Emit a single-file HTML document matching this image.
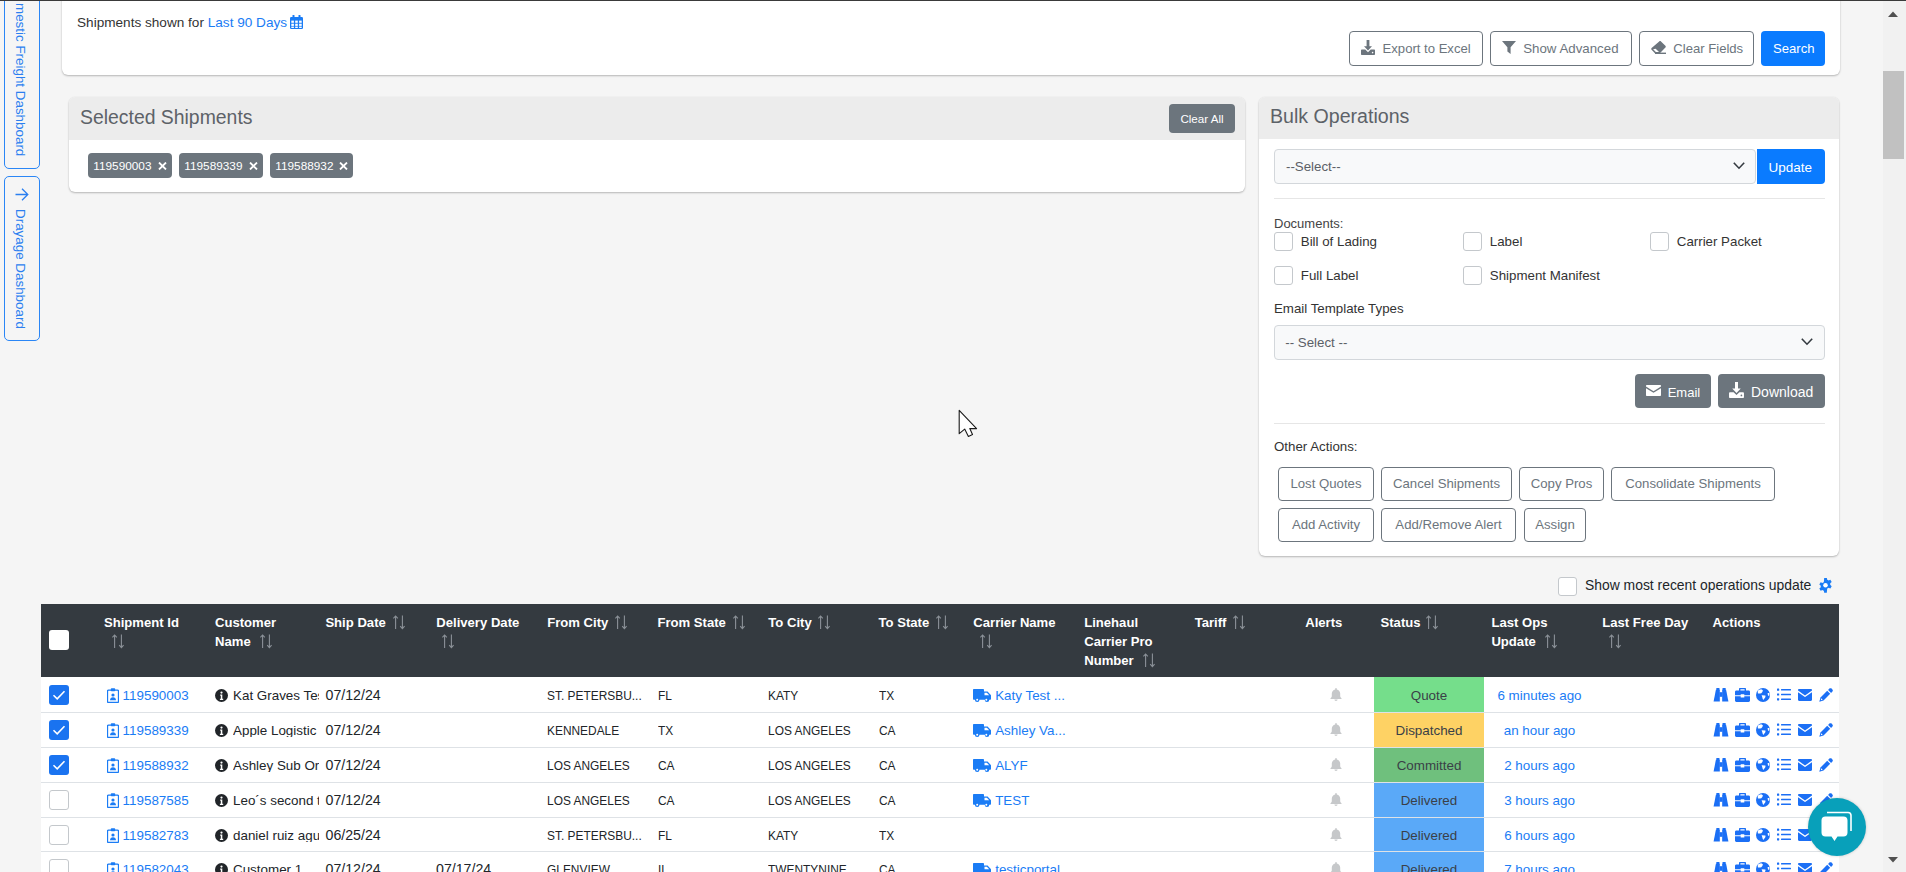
<!DOCTYPE html>
<html><head><meta charset="utf-8">
<style>
*{box-sizing:border-box}
html,body{margin:0;padding:0}
body{width:1906px;height:872px;overflow:hidden;position:relative;background:#f5f5f5;font-family:"Liberation Sans",sans-serif;font-size:14px;color:#212529}
.a{position:absolute}
.t{position:absolute;white-space:nowrap;line-height:1}
.card{position:absolute;background:#fff;border-radius:6px;box-shadow:0 1px 2px rgba(0,0,0,.25),0 0 1px rgba(0,0,0,.1)}
.bo{position:absolute;border:1px solid #6c757d;border-radius:4px;background:#fff}
.cb{position:absolute;border:1px solid #c4c8cc;border-radius:3px;background:#fff}
</style></head><body>
<div class="a" style="left:4px;top:-10px;width:36px;height:179px;border:1.8px solid #2a86f6;border-radius:0 0 5px 5px"></div>
<div class="a" style="left:4px;top:176px;width:36px;height:165px;border:1.8px solid #2a86f6;border-radius:5px"></div>
<div class="t" style="left:27px;top:2.5px;transform-origin:0 0;transform:rotate(90deg);font-size:13.4px;color:#2b7ff0">mestic Freight Dashboard</div>
<div class="t" style="left:27px;top:209px;transform-origin:0 0;transform:rotate(90deg);font-size:13.4px;color:#2b7ff0">Drayage Dashboard</div>
<svg class="a" style="left:14.5px;top:188px;" width="14" height="13" viewBox="0 0 14 13" fill="#1a7cf5"><path d="M0.5 6.5H13M7 0.8L12.8 6.5L7 12.2" stroke="#2b7ff0" stroke-width="1.3" fill="none"/></svg>
<div class="card" style="left:62px;top:-10px;width:1778px;height:85px"></div>
<div class="t" style="left:77.0px;top:15.69px;font-size:13.6px;color:#333;">Shipments shown for <span style="color:#1a7cf5">Last 90 Days</span></div>
<svg class="a" style="left:290px;top:15px;" width="13" height="14" viewBox="0 0 13 14" fill="#1a7cf5"><rect x="0" y="2" width="13" height="12" rx="1.2"/><rect x="2.5" y="0" width="2" height="3.5" rx=".6"/><rect x="8.5" y="0" width="2" height="3.5" rx=".6"/><g fill="#fff"><rect x="1.3" y="5.6" width="2.6" height="2.2"/><rect x="5.2" y="5.6" width="2.6" height="2.2"/><rect x="9.1" y="5.6" width="2.6" height="2.2"/><rect x="1.3" y="8.7" width="2.6" height="2.2"/><rect x="5.2" y="8.7" width="2.6" height="2.2"/><rect x="9.1" y="8.7" width="2.6" height="2.2"/><rect x="1.3" y="11.6" width="2.6" height="1.4"/><rect x="5.2" y="11.6" width="2.6" height="1.4"/><rect x="9.1" y="11.6" width="2.6" height="1.4"/></g></svg>
<div class="a" style="left:1349px;top:31px;width:134px;height:35px;border:1px solid #6c757d;border-radius:4px;background:#fff"></div>
<div class="a" style="left:1490px;top:31px;width:142px;height:35px;border:1px solid #6c757d;border-radius:4px;background:#fff"></div>
<div class="a" style="left:1639px;top:31px;width:115px;height:35px;border:1px solid #6c757d;border-radius:4px;background:#fff"></div>
<div class="a" style="left:1761px;top:31px;width:64px;height:35px;border-radius:4px;background:#0a7bff"></div>
<svg class="a" style="left:1361px;top:40px;" width="14" height="15" viewBox="0 0 14 15" fill="#6c757d"><path d="M5.6 0h2.8v6.2h2.6L7 10.4 3 6.2h2.6z"/><path d="M0 10.5c0-.6.4-1 1-1h3.3L7 12.2 9.7 9.5H13c.6 0 1 .4 1 1V14c0 .6-.4 1-1 1H1c-.6 0-1-.4-1-1z"/><circle cx="11.6" cy="12.6" r=".8" fill="#fff"/></svg>
<div class="t" style="left:1382.6px;top:42.41px;font-size:13.1px;color:#6c757d;">Export to Excel</div>
<svg class="a" style="left:1502px;top:41px;" width="14" height="13" viewBox="0 0 14 13" fill="#6c757d"><path d="M0 0h14L8.6 6.2V13L5.4 10.6V6.2z"/></svg>
<div class="t" style="left:1523.2px;top:42.24px;font-size:13.3px;color:#6c757d;">Show Advanced</div>
<svg class="a" style="left:1651px;top:41px;" width="15" height="13" viewBox="0 0 15 13" fill="#6c757d"><path d="M8.2 0.4c.5-.5 1.3-.5 1.8 0l4.4 4.4c.5.5.5 1.3 0 1.8L8.6 12.4H4.2L0.6 8.8c-.5-.5-.5-1.3 0-1.8z"/><path d="M4.7 7.8L8 11H4.9L2.1 8.3z" fill="#fff"/><rect x="4" y="11.6" width="11" height="1.4"/></svg>
<div class="t" style="left:1673.3px;top:42.41px;font-size:13.1px;color:#6c757d;">Clear Fields</div>
<div class="t" style="left:1773.0px;top:42.41px;font-size:13.1px;color:#fff;">Search</div>
<div class="card" style="left:69px;top:97px;width:1176px;height:95px;overflow:hidden"><div class="a" style="left:0;top:0;width:100%;height:43px;background:#ececec"></div></div>
<div class="t" style="left:80.0px;top:107.58px;font-size:19.4px;color:#5d6268;">Selected Shipments</div>
<div class="a" style="left:1169px;top:104px;width:66px;height:29px;border-radius:4px;background:#6c757d"></div>
<div class="t" style="left:902.0px;width:600px;text-align:center;top:112.68px;font-size:11.6px;color:#fff;">Clear All</div>
<div class="a" style="left:88px;top:153px;width:84px;height:25px;border-radius:4px;background:#6c757d"></div>
<div class="t" style="left:93.3px;top:160.51px;font-size:11.8px;color:#fff;">119590003</div>
<svg class="a" style="left:158px;top:162px;" width="9" height="8" viewBox="0 0 9 8" fill="#fff"><path d="M1 0.5L8 7.5M8 0.5L1 7.5" stroke="#fff" stroke-width="1.8"/></svg>
<div class="a" style="left:179px;top:153px;width:84px;height:25px;border-radius:4px;background:#6c757d"></div>
<div class="t" style="left:184.3px;top:160.51px;font-size:11.8px;color:#fff;">119589339</div>
<svg class="a" style="left:249px;top:162px;" width="9" height="8" viewBox="0 0 9 8" fill="#fff"><path d="M1 0.5L8 7.5M8 0.5L1 7.5" stroke="#fff" stroke-width="1.8"/></svg>
<div class="a" style="left:270px;top:153px;width:83px;height:25px;border-radius:4px;background:#6c757d"></div>
<div class="t" style="left:275.3px;top:160.51px;font-size:11.8px;color:#fff;">119588932</div>
<svg class="a" style="left:339px;top:162px;" width="9" height="8" viewBox="0 0 9 8" fill="#fff"><path d="M1 0.5L8 7.5M8 0.5L1 7.5" stroke="#fff" stroke-width="1.8"/></svg>
<div class="card" style="left:1259px;top:97px;width:580px;height:459px;overflow:hidden"><div class="a" style="left:0;top:0;width:100%;height:42px;background:#ececec"></div></div>
<div class="t" style="left:1270.0px;top:107.21px;font-size:19.6px;color:#5d6268;">Bulk Operations</div>
<div class="a" style="left:1274px;top:149px;width:482px;height:35px;border:1px solid #d3d7db;border-radius:4px;background:#f8f9fa"></div>
<div class="t" style="left:1286.0px;top:159.74px;font-size:13.3px;color:#5b6066;">--Select--</div>
<svg class="a" style="left:1733px;top:162px;" width="12" height="8" viewBox="0 0 12 8" fill="#1a7cf5"><path d="M0.8 0.8L6 6.2 11.2 0.8" stroke="#343a40" stroke-width="1.6" fill="none"/></svg>
<div class="a" style="left:1757px;top:149px;width:68px;height:35px;border-radius:0 4px 4px 0;background:#0a7bff"></div>
<div class="t" style="left:1768.4px;top:160.87px;font-size:13.5px;color:#fff;">Update</div>
<div class="a" style="left:1274px;top:198px;width:551px;height:1px;background:#e6e6e6"></div>
<div class="t" style="left:1274.0px;top:216.60px;font-size:13px;color:#444;">Documents:</div>
<div class="cb" style="left:1274px;top:232px;width:19px;height:19px"></div>
<div class="t" style="left:1300.8px;top:234.74px;font-size:13.3px;color:#333;">Bill of Lading</div>
<div class="cb" style="left:1463px;top:232px;width:19px;height:19px"></div>
<div class="t" style="left:1489.8px;top:234.74px;font-size:13.3px;color:#333;">Label</div>
<div class="cb" style="left:1650px;top:232px;width:19px;height:19px"></div>
<div class="t" style="left:1676.8px;top:234.74px;font-size:13.3px;color:#333;">Carrier Packet</div>
<div class="cb" style="left:1274px;top:266px;width:19px;height:19px"></div>
<div class="t" style="left:1300.8px;top:268.74px;font-size:13.3px;color:#333;">Full Label</div>
<div class="cb" style="left:1463px;top:266px;width:19px;height:19px"></div>
<div class="t" style="left:1489.8px;top:268.74px;font-size:13.3px;color:#333;">Shipment Manifest</div>
<div class="t" style="left:1274.0px;top:301.74px;font-size:13.3px;color:#333;">Email Template Types</div>
<div class="a" style="left:1274px;top:325px;width:551px;height:35px;border:1px solid #d3d7db;border-radius:4px;background:#f8f9fa"></div>
<div class="t" style="left:1285.3px;top:336.14px;font-size:13.3px;color:#5b6066;">-- Select --</div>
<svg class="a" style="left:1801px;top:338px;" width="12" height="8" viewBox="0 0 12 8" fill="#1a7cf5"><path d="M0.8 0.8L6 6.2 11.2 0.8" stroke="#343a40" stroke-width="1.6" fill="none"/></svg>
<div class="a" style="left:1635px;top:374px;width:76px;height:34px;border-radius:4px;background:#6c757d"></div>
<svg class="a" style="left:1646px;top:385px;" width="15" height="11" viewBox="0 0 15 11" fill="#fff"><path d="M0 1c0-.6.4-1 1-1h13c.6 0 1 .4 1 1v.6L7.5 6.2 0 1.6z"/><path d="M0 3.2l7.5 4.6L15 3.2V10c0 .6-.4 1-1 1H1c-.6 0-1-.4-1-1z"/></svg>
<div class="t" style="left:1667.7px;top:385.80px;font-size:13.0px;color:#fff;">Email</div>
<div class="a" style="left:1718px;top:374px;width:107px;height:34px;border-radius:4px;background:#6c757d"></div>
<svg class="a" style="left:1729px;top:382px;" width="15" height="16" viewBox="0 0 14 15" fill="#fff"><path d="M5.6 0h2.8v6.2h2.6L7 10.4 3 6.2h2.6z"/><path d="M0 10.5c0-.6.4-1 1-1h3.3L7 12.2 9.7 9.5H13c.6 0 1 .4 1 1V14c0 .6-.4 1-1 1H1c-.6 0-1-.4-1-1z"/><circle cx="11.6" cy="12.6" r=".8" fill="#6c757d"/></svg>
<div class="t" style="left:1751.0px;top:384.95px;font-size:14.0px;color:#fff;">Download</div>
<div class="a" style="left:1274px;top:423px;width:551px;height:1px;background:#e6e6e6"></div>
<div class="t" style="left:1274.0px;top:440.44px;font-size:13.3px;color:#333;">Other Actions:</div>
<div class="a" style="left:1278px;top:467px;width:96px;height:34px;border:1px solid #6c757d;border-radius:4px;background:#fff"></div>
<div class="t" style="left:1026.0px;width:600px;text-align:center;top:477.33px;font-size:13.2px;color:#6c757d;">Lost Quotes</div>
<div class="a" style="left:1381px;top:467px;width:131px;height:34px;border:1px solid #6c757d;border-radius:4px;background:#fff"></div>
<div class="t" style="left:1146.5px;width:600px;text-align:center;top:477.33px;font-size:13.2px;color:#6c757d;">Cancel Shipments</div>
<div class="a" style="left:1519px;top:467px;width:85px;height:34px;border:1px solid #6c757d;border-radius:4px;background:#fff"></div>
<div class="t" style="left:1261.5px;width:600px;text-align:center;top:477.33px;font-size:13.2px;color:#6c757d;">Copy Pros</div>
<div class="a" style="left:1611px;top:467px;width:164px;height:34px;border:1px solid #6c757d;border-radius:4px;background:#fff"></div>
<div class="t" style="left:1393.0px;width:600px;text-align:center;top:477.33px;font-size:13.2px;color:#6c757d;">Consolidate Shipments</div>
<div class="a" style="left:1278px;top:508px;width:96px;height:34px;border:1px solid #6c757d;border-radius:4px;background:#fff"></div>
<div class="t" style="left:1026.0px;width:600px;text-align:center;top:518.33px;font-size:13.2px;color:#6c757d;">Add Activity</div>
<div class="a" style="left:1381px;top:508px;width:135px;height:34px;border:1px solid #6c757d;border-radius:4px;background:#fff"></div>
<div class="t" style="left:1148.5px;width:600px;text-align:center;top:518.33px;font-size:13.2px;color:#6c757d;">Add/Remove Alert</div>
<div class="a" style="left:1524px;top:508px;width:62px;height:34px;border:1px solid #6c757d;border-radius:4px;background:#fff"></div>
<div class="t" style="left:1255.0px;width:600px;text-align:center;top:518.33px;font-size:13.2px;color:#6c757d;">Assign</div>
<div class="cb" style="left:1558px;top:577px;width:19px;height:19px"></div>
<div class="t" style="left:1585.0px;top:579.23px;font-size:13.9px;color:#212529;">Show most recent operations update</div>
<svg class="a" style="left:1818px;top:578px;" width="15" height="15" viewBox="0 0 16 16" fill="#1a7cf5"><path d="M9.4 0l.4 2.1c.5.2 1 .4 1.4.8l2-.8 1.4 2.4-1.6 1.4c.1.5.1 1.1 0 1.6l1.6 1.4-1.4 2.4-2-.8c-.4.3-.9.6-1.4.8L9.4 16H6.6l-.4-2.1c-.5-.2-1-.4-1.4-.8l-2 .8L1.4 11.5 3 10.1c-.1-.5-.1-1.1 0-1.6L1.4 7.1 2.8 4.7l2 .8c.4-.3.9-.6 1.4-.8L6.6 0z" transform="translate(0,-.2)"/><circle cx="8" cy="7.8" r="2.4" fill="#fff"/></svg>
<div class="a" style="left:41px;top:604px;width:1798px;height:73px;background:#343a40"></div>
<div class="a" style="left:41px;top:677px;width:1798px;height:203px;background:#fff"></div>
<div class="a" style="left:49px;top:630px;width:20px;height:20px;background:#fff;border-radius:3px"></div>
<div class="t" style="left:104.0px;top:615.51px;font-size:13.1px;color:#fff;font-weight:bold;">Shipment Id</div>
<svg class="a" style="left:111.5px;top:634.2px;" width="12" height="15" viewBox="0 0 12 15" fill="none"><path d="M2.6 1V14M0.4 3.4L2.6 1 4.8 3.4M9.4 0.6V13.6M7.2 11.2L9.4 13.6 11.6 11.2" stroke="#8b9198" stroke-width="1.1" fill="none"/></svg>
<div class="t" style="left:215.0px;top:615.51px;font-size:13.1px;color:#fff;font-weight:bold;">Customer</div>
<div class="t" style="left:215.0px;top:634.61px;font-size:13.1px;color:#fff;font-weight:bold;">Name</div>
<svg class="a" style="left:259.5px;top:634.2px;" width="12" height="15" viewBox="0 0 12 15" fill="none"><path d="M2.6 1V14M0.4 3.4L2.6 1 4.8 3.4M9.4 0.6V13.6M7.2 11.2L9.4 13.6 11.6 11.2" stroke="#8b9198" stroke-width="1.1" fill="none"/></svg>
<div class="t" style="left:325.4px;top:615.51px;font-size:13.1px;color:#fff;font-weight:bold;">Ship Date</div>
<svg class="a" style="left:393.2px;top:615.1px;" width="12" height="15" viewBox="0 0 12 15" fill="none"><path d="M2.6 1V14M0.4 3.4L2.6 1 4.8 3.4M9.4 0.6V13.6M7.2 11.2L9.4 13.6 11.6 11.2" stroke="#8b9198" stroke-width="1.1" fill="none"/></svg>
<div class="t" style="left:436.3px;top:615.51px;font-size:13.1px;color:#fff;font-weight:bold;">Delivery Date</div>
<svg class="a" style="left:442.0px;top:634.2px;" width="12" height="15" viewBox="0 0 12 15" fill="none"><path d="M2.6 1V14M0.4 3.4L2.6 1 4.8 3.4M9.4 0.6V13.6M7.2 11.2L9.4 13.6 11.6 11.2" stroke="#8b9198" stroke-width="1.1" fill="none"/></svg>
<div class="t" style="left:547.2px;top:615.51px;font-size:13.1px;color:#fff;font-weight:bold;">From City</div>
<svg class="a" style="left:614.5px;top:615.1px;" width="12" height="15" viewBox="0 0 12 15" fill="none"><path d="M2.6 1V14M0.4 3.4L2.6 1 4.8 3.4M9.4 0.6V13.6M7.2 11.2L9.4 13.6 11.6 11.2" stroke="#8b9198" stroke-width="1.1" fill="none"/></svg>
<div class="t" style="left:657.5px;top:615.51px;font-size:13.1px;color:#fff;font-weight:bold;">From State</div>
<svg class="a" style="left:733.1px;top:615.1px;" width="12" height="15" viewBox="0 0 12 15" fill="none"><path d="M2.6 1V14M0.4 3.4L2.6 1 4.8 3.4M9.4 0.6V13.6M7.2 11.2L9.4 13.6 11.6 11.2" stroke="#8b9198" stroke-width="1.1" fill="none"/></svg>
<div class="t" style="left:768.3px;top:615.51px;font-size:13.1px;color:#fff;font-weight:bold;">To City</div>
<svg class="a" style="left:818.3px;top:615.1px;" width="12" height="15" viewBox="0 0 12 15" fill="none"><path d="M2.6 1V14M0.4 3.4L2.6 1 4.8 3.4M9.4 0.6V13.6M7.2 11.2L9.4 13.6 11.6 11.2" stroke="#8b9198" stroke-width="1.1" fill="none"/></svg>
<div class="t" style="left:878.5px;top:615.51px;font-size:13.1px;color:#fff;font-weight:bold;">To State</div>
<svg class="a" style="left:936.0px;top:615.1px;" width="12" height="15" viewBox="0 0 12 15" fill="none"><path d="M2.6 1V14M0.4 3.4L2.6 1 4.8 3.4M9.4 0.6V13.6M7.2 11.2L9.4 13.6 11.6 11.2" stroke="#8b9198" stroke-width="1.1" fill="none"/></svg>
<div class="t" style="left:973.3px;top:615.51px;font-size:13.1px;color:#fff;font-weight:bold;">Carrier Name</div>
<svg class="a" style="left:980.3px;top:634.2px;" width="12" height="15" viewBox="0 0 12 15" fill="none"><path d="M2.6 1V14M0.4 3.4L2.6 1 4.8 3.4M9.4 0.6V13.6M7.2 11.2L9.4 13.6 11.6 11.2" stroke="#8b9198" stroke-width="1.1" fill="none"/></svg>
<div class="t" style="left:1084.2px;top:615.51px;font-size:13.1px;color:#fff;font-weight:bold;">Linehaul</div>
<div class="t" style="left:1084.2px;top:634.61px;font-size:13.1px;color:#fff;font-weight:bold;">Carrier Pro</div>
<div class="t" style="left:1084.2px;top:653.71px;font-size:13.1px;color:#fff;font-weight:bold;">Number</div>
<svg class="a" style="left:1143.0px;top:653.3px;" width="12" height="15" viewBox="0 0 12 15" fill="none"><path d="M2.6 1V14M0.4 3.4L2.6 1 4.8 3.4M9.4 0.6V13.6M7.2 11.2L9.4 13.6 11.6 11.2" stroke="#8b9198" stroke-width="1.1" fill="none"/></svg>
<div class="t" style="left:1194.7px;top:615.51px;font-size:13.1px;color:#fff;font-weight:bold;">Tariff</div>
<svg class="a" style="left:1233.4px;top:615.1px;" width="12" height="15" viewBox="0 0 12 15" fill="none"><path d="M2.6 1V14M0.4 3.4L2.6 1 4.8 3.4M9.4 0.6V13.6M7.2 11.2L9.4 13.6 11.6 11.2" stroke="#8b9198" stroke-width="1.1" fill="none"/></svg>
<div class="t" style="left:1305.2px;top:615.51px;font-size:13.1px;color:#fff;font-weight:bold;">Alerts</div>
<div class="t" style="left:1380.5px;top:615.51px;font-size:13.1px;color:#fff;font-weight:bold;">Status</div>
<svg class="a" style="left:1426.3px;top:615.1px;" width="12" height="15" viewBox="0 0 12 15" fill="none"><path d="M2.6 1V14M0.4 3.4L2.6 1 4.8 3.4M9.4 0.6V13.6M7.2 11.2L9.4 13.6 11.6 11.2" stroke="#8b9198" stroke-width="1.1" fill="none"/></svg>
<div class="t" style="left:1491.4px;top:615.51px;font-size:13.1px;color:#fff;font-weight:bold;">Last Ops</div>
<div class="t" style="left:1491.4px;top:634.61px;font-size:13.1px;color:#fff;font-weight:bold;">Update</div>
<svg class="a" style="left:1544.9px;top:634.2px;" width="12" height="15" viewBox="0 0 12 15" fill="none"><path d="M2.6 1V14M0.4 3.4L2.6 1 4.8 3.4M9.4 0.6V13.6M7.2 11.2L9.4 13.6 11.6 11.2" stroke="#8b9198" stroke-width="1.1" fill="none"/></svg>
<div class="t" style="left:1602.3px;top:615.51px;font-size:13.1px;color:#fff;font-weight:bold;">Last Free Day</div>
<svg class="a" style="left:1608.9px;top:634.2px;" width="12" height="15" viewBox="0 0 12 15" fill="none"><path d="M2.6 1V14M0.4 3.4L2.6 1 4.8 3.4M9.4 0.6V13.6M7.2 11.2L9.4 13.6 11.6 11.2" stroke="#8b9198" stroke-width="1.1" fill="none"/></svg>
<div class="t" style="left:1712.6px;top:615.51px;font-size:13.1px;color:#fff;font-weight:bold;">Actions</div>
<div class="a" style="left:1374px;top:677px;width:110px;height:35px;background:#75de8b"></div>
<div class="a" style="left:49px;top:685px;width:20px;height:20px;background:#1a73f0;border-radius:3px"></div>
<svg class="a" style="left:52px;top:689px;" width="14" height="12" viewBox="0 0 14 12" fill="none"><path d="M1.5 6.2L5.2 9.8 12.5 2.2" stroke="#fff" stroke-width="1.6" fill="none"/></svg>
<svg class="a" style="left:107px;top:688px;" width="12" height="15" viewBox="0 0 12 15" fill="#1a7cf5"><path d="M1.5 2.2h9c.6 0 1 .4 1 1v10.3c0 .6-.4 1-1 1h-9c-.6 0-1-.4-1-1V3.2c0-.6.4-1 1-1z" stroke="#1a7cf5" stroke-width="1.3" fill="none"/><rect x="3.8" y="0.3" width="4.4" height="3" rx=".8"/><circle cx="6" cy="7" r="1.6"/><path d="M3 12.2c0-1.7 1.3-2.9 3-2.9s3 1.2 3 2.9z"/></svg>
<div class="t" style="left:122.6px;top:689.06px;font-size:13.4px;color:#1a7cf5;">119590003</div>
<svg class="a" style="left:215px;top:689px;" width="13" height="13" viewBox="0 0 13 13" fill="#212529"><circle cx="6.5" cy="6.5" r="6.5"/><circle cx="6.5" cy="3.6" r="1.1" fill="#fff"/><path d="M5.2 5.6h2.1v4.2h.9v1.1H4.9V9.8h.9V6.7h-.6z" fill="#fff"/></svg>
<div class="t" style="left:233px;top:689.06px;width:86px;overflow:hidden;font-size:13.4px;color:#212529">Kat Graves Tes</div>
<div class="t" style="left:325.5px;top:688.38px;font-size:14.2px;color:#212529;">07/12/24</div>
<div class="t" style="left:547.0px;top:689.06px;font-size:13.4px;color:#212529;transform-origin:0 0;transform:scaleX(.89)">ST. PETERSBU...</div>
<div class="t" style="left:657.5px;top:689.06px;font-size:13.4px;color:#212529;transform-origin:0 0;transform:scaleX(.89)">FL</div>
<div class="t" style="left:768.3px;top:689.06px;font-size:13.4px;color:#212529;transform-origin:0 0;transform:scaleX(.89)">KATY</div>
<div class="t" style="left:878.5px;top:689.06px;font-size:13.4px;color:#212529;transform-origin:0 0;transform:scaleX(.89)">TX</div>
<svg class="a" style="left:973px;top:689px;" width="18" height="13" viewBox="0 0 18 13" fill="#1a7cf5"><path d="M0 1c0-.6.4-1 1-1h9c.6 0 1 .4 1 1v1.5h3.2c.3 0 .6.1.8.4l2.6 2.8c.2.2.4.5.4.8V10c0 .4-.3.7-.7.7h-1a2.3 2.3 0 0 1-4.6 0H6.5a2.3 2.3 0 0 1-4.6 0H1c-.6 0-1-.4-1-1z"/><path d="M11.5 3.8h2.4l2.3 2.4h-4.7z" fill="#fff"/><circle cx="4.2" cy="10.7" r="1" fill="#fff"/><circle cx="13.3" cy="10.7" r="1" fill="#fff"/></svg>
<div class="t" style="left:995.2px;top:689.06px;font-size:13.4px;color:#1a7cf5;">Katy Test ...</div>
<svg class="a" style="left:1330px;top:688px;" width="12" height="13" viewBox="0 0 12 13" fill="#c6c8ca"><path d="M6 0c.5 0 .8.3.8.8v.6c2 .4 3.4 2.1 3.4 4.2v2.6c0 .7.5 1.4 1.3 2v.9H.5v-.9c.8-.6 1.3-1.3 1.3-2V5.6c0-2.1 1.4-3.8 3.4-4.2V.8C5.2.3 5.5 0 6 0z"/><path d="M4.4 11.6h3.2c0 .9-.7 1.4-1.6 1.4s-1.6-.5-1.6-1.4z"/></svg>
<div class="t" style="left:1129.0px;width:600px;text-align:center;top:689.06px;font-size:13.4px;color:#3a4047;">Quote</div>
<div class="t" style="left:1239.5px;width:600px;text-align:center;top:689.06px;font-size:13.4px;color:#1a7cf5;">6 minutes ago</div>
<svg class="a" style="left:1713px;top:688px;" width="16" height="14" viewBox="0 0 16 14" fill="#1b6ff5"><path d="M2.9 1.8h3.9v11.7H0.6z"/><path d="M13.1 1.8H9.2v11.7h6.2z"/><rect x="6.5" y="4.2" width="3" height="4.6"/><rect x="3.3" y="0" width="3.2" height="2.4" rx=".5"/><rect x="9.5" y="0" width="3.2" height="2.4" rx=".5"/></svg>
<svg class="a" style="left:1735px;top:688px;" width="15" height="14" viewBox="0 0 15 14" fill="#1b6ff5"><path d="M5 0h5c.6 0 1 .4 1 1v1.6h2.6c.8 0 1.4.6 1.4 1.4v3.2H9.3v-1H5.7v1H0V4c0-.8.6-1.4 1.4-1.4H4V1c0-.6.4-1 1-1zm.4 1.3v1.3h4.2V1.3z"/><path d="M0 8.2h5.7v1.2h3.6V8.2H15v4.4c0 .8-.6 1.4-1.4 1.4H1.4C.6 14 0 13.4 0 12.6z"/></svg>
<svg class="a" style="left:1756px;top:687.7px;" width="14" height="14" viewBox="0 0 14 14" fill="#1b6ff5"><circle cx="7" cy="7" r="7"/><g fill="#fff"><path d="M1.9 2.6C2.8 1.8 4 1.4 5.2 1.3L6.9 2.2 6.4 3.9 5.3 5.2 4.2 5.6 2 5.5C1.7 4.5 1.6 3.4 1.9 2.6z"/><path d="M5.6 7.2L9.4 7.5C9.7 8.5 9.3 9.6 8.6 10.3L7.2 12 6.6 10.6 6.2 9z"/><path d="M11.6 4.9L13.2 5C13.5 6 13.5 7.1 13.2 8L12 7.4z"/></g></svg>
<svg class="a" style="left:1777px;top:688px;" width="14" height="13" viewBox="0 0 14 13" fill="#1b6ff5"><rect x="0" y="0.6" width="2.2" height="2.2" rx=".4"/><rect x="0" y="5.4" width="2.2" height="2.2" rx=".4"/><rect x="0" y="10.2" width="2.2" height="2.2" rx=".4"/><rect x="4" y="1" width="10" height="1.4" rx=".5"/><rect x="4" y="5.8" width="10" height="1.4" rx=".5"/><rect x="4" y="10.6" width="10" height="1.4" rx=".5"/></svg>
<svg class="a" style="left:1798px;top:689px;" width="14" height="12" viewBox="0 0 14 12" fill="#1b6ff5"><path d="M0 1.2C0 .5.5 0 1.2 0h11.6c.7 0 1.2.5 1.2 1.2v.4L7 6.4 0 1.6z"/><path d="M0 3.2L7 8l7-4.8v7.6c0 .7-.5 1.2-1.2 1.2H1.2C.5 12 0 11.5 0 10.8z"/></svg>
<svg class="a" style="left:1819px;top:688px;" width="14" height="14" viewBox="0 0 14 14" fill="#1b6ff5"><path d="M10.4.6c.6-.6 1.6-.6 2.2 0l.8.8c.6.6.6 1.6 0 2.2l-1.3 1.3-3-3z"/><path d="M8.2 2.8l3 3L4.5 12.5.3 13.7 1.5 9.5z"/><path d="M2.2 10.3l1.5 1.5-1.9.5z" fill="#fff"/></svg>
<div class="a" style="left:41px;top:712px;width:1798px;height:1px;background:#dee2e6"></div>
<div class="a" style="left:1374px;top:713px;width:110px;height:34px;background:#fed264"></div>
<div class="a" style="left:49px;top:720px;width:20px;height:20px;background:#1a73f0;border-radius:3px"></div>
<svg class="a" style="left:52px;top:724px;" width="14" height="12" viewBox="0 0 14 12" fill="none"><path d="M1.5 6.2L5.2 9.8 12.5 2.2" stroke="#fff" stroke-width="1.6" fill="none"/></svg>
<svg class="a" style="left:107px;top:723px;" width="12" height="15" viewBox="0 0 12 15" fill="#1a7cf5"><path d="M1.5 2.2h9c.6 0 1 .4 1 1v10.3c0 .6-.4 1-1 1h-9c-.6 0-1-.4-1-1V3.2c0-.6.4-1 1-1z" stroke="#1a7cf5" stroke-width="1.3" fill="none"/><rect x="3.8" y="0.3" width="4.4" height="3" rx=".8"/><circle cx="6" cy="7" r="1.6"/><path d="M3 12.2c0-1.7 1.3-2.9 3-2.9s3 1.2 3 2.9z"/></svg>
<div class="t" style="left:122.6px;top:724.06px;font-size:13.4px;color:#1a7cf5;">119589339</div>
<svg class="a" style="left:215px;top:724px;" width="13" height="13" viewBox="0 0 13 13" fill="#212529"><circle cx="6.5" cy="6.5" r="6.5"/><circle cx="6.5" cy="3.6" r="1.1" fill="#fff"/><path d="M5.2 5.6h2.1v4.2h.9v1.1H4.9V9.8h.9V6.7h-.6z" fill="#fff"/></svg>
<div class="t" style="left:233px;top:724.06px;width:86px;overflow:hidden;font-size:13.4px;color:#212529">Apple Logistic</div>
<div class="t" style="left:325.5px;top:723.38px;font-size:14.2px;color:#212529;">07/12/24</div>
<div class="t" style="left:547.0px;top:724.06px;font-size:13.4px;color:#212529;transform-origin:0 0;transform:scaleX(.89)">KENNEDALE</div>
<div class="t" style="left:657.5px;top:724.06px;font-size:13.4px;color:#212529;transform-origin:0 0;transform:scaleX(.89)">TX</div>
<div class="t" style="left:768.3px;top:724.06px;font-size:13.4px;color:#212529;transform-origin:0 0;transform:scaleX(.89)">LOS ANGELES</div>
<div class="t" style="left:878.5px;top:724.06px;font-size:13.4px;color:#212529;transform-origin:0 0;transform:scaleX(.89)">CA</div>
<svg class="a" style="left:973px;top:724px;" width="18" height="13" viewBox="0 0 18 13" fill="#1a7cf5"><path d="M0 1c0-.6.4-1 1-1h9c.6 0 1 .4 1 1v1.5h3.2c.3 0 .6.1.8.4l2.6 2.8c.2.2.4.5.4.8V10c0 .4-.3.7-.7.7h-1a2.3 2.3 0 0 1-4.6 0H6.5a2.3 2.3 0 0 1-4.6 0H1c-.6 0-1-.4-1-1z"/><path d="M11.5 3.8h2.4l2.3 2.4h-4.7z" fill="#fff"/><circle cx="4.2" cy="10.7" r="1" fill="#fff"/><circle cx="13.3" cy="10.7" r="1" fill="#fff"/></svg>
<div class="t" style="left:995.2px;top:724.06px;font-size:13.4px;color:#1a7cf5;">Ashley Va...</div>
<svg class="a" style="left:1330px;top:723px;" width="12" height="13" viewBox="0 0 12 13" fill="#c6c8ca"><path d="M6 0c.5 0 .8.3.8.8v.6c2 .4 3.4 2.1 3.4 4.2v2.6c0 .7.5 1.4 1.3 2v.9H.5v-.9c.8-.6 1.3-1.3 1.3-2V5.6c0-2.1 1.4-3.8 3.4-4.2V.8C5.2.3 5.5 0 6 0z"/><path d="M4.4 11.6h3.2c0 .9-.7 1.4-1.6 1.4s-1.6-.5-1.6-1.4z"/></svg>
<div class="t" style="left:1129.0px;width:600px;text-align:center;top:724.06px;font-size:13.4px;color:#3a4047;">Dispatched</div>
<div class="t" style="left:1239.5px;width:600px;text-align:center;top:724.06px;font-size:13.4px;color:#1a7cf5;">an hour ago</div>
<svg class="a" style="left:1713px;top:723px;" width="16" height="14" viewBox="0 0 16 14" fill="#1b6ff5"><path d="M2.9 1.8h3.9v11.7H0.6z"/><path d="M13.1 1.8H9.2v11.7h6.2z"/><rect x="6.5" y="4.2" width="3" height="4.6"/><rect x="3.3" y="0" width="3.2" height="2.4" rx=".5"/><rect x="9.5" y="0" width="3.2" height="2.4" rx=".5"/></svg>
<svg class="a" style="left:1735px;top:723px;" width="15" height="14" viewBox="0 0 15 14" fill="#1b6ff5"><path d="M5 0h5c.6 0 1 .4 1 1v1.6h2.6c.8 0 1.4.6 1.4 1.4v3.2H9.3v-1H5.7v1H0V4c0-.8.6-1.4 1.4-1.4H4V1c0-.6.4-1 1-1zm.4 1.3v1.3h4.2V1.3z"/><path d="M0 8.2h5.7v1.2h3.6V8.2H15v4.4c0 .8-.6 1.4-1.4 1.4H1.4C.6 14 0 13.4 0 12.6z"/></svg>
<svg class="a" style="left:1756px;top:722.7px;" width="14" height="14" viewBox="0 0 14 14" fill="#1b6ff5"><circle cx="7" cy="7" r="7"/><g fill="#fff"><path d="M1.9 2.6C2.8 1.8 4 1.4 5.2 1.3L6.9 2.2 6.4 3.9 5.3 5.2 4.2 5.6 2 5.5C1.7 4.5 1.6 3.4 1.9 2.6z"/><path d="M5.6 7.2L9.4 7.5C9.7 8.5 9.3 9.6 8.6 10.3L7.2 12 6.6 10.6 6.2 9z"/><path d="M11.6 4.9L13.2 5C13.5 6 13.5 7.1 13.2 8L12 7.4z"/></g></svg>
<svg class="a" style="left:1777px;top:723px;" width="14" height="13" viewBox="0 0 14 13" fill="#1b6ff5"><rect x="0" y="0.6" width="2.2" height="2.2" rx=".4"/><rect x="0" y="5.4" width="2.2" height="2.2" rx=".4"/><rect x="0" y="10.2" width="2.2" height="2.2" rx=".4"/><rect x="4" y="1" width="10" height="1.4" rx=".5"/><rect x="4" y="5.8" width="10" height="1.4" rx=".5"/><rect x="4" y="10.6" width="10" height="1.4" rx=".5"/></svg>
<svg class="a" style="left:1798px;top:724px;" width="14" height="12" viewBox="0 0 14 12" fill="#1b6ff5"><path d="M0 1.2C0 .5.5 0 1.2 0h11.6c.7 0 1.2.5 1.2 1.2v.4L7 6.4 0 1.6z"/><path d="M0 3.2L7 8l7-4.8v7.6c0 .7-.5 1.2-1.2 1.2H1.2C.5 12 0 11.5 0 10.8z"/></svg>
<svg class="a" style="left:1819px;top:723px;" width="14" height="14" viewBox="0 0 14 14" fill="#1b6ff5"><path d="M10.4.6c.6-.6 1.6-.6 2.2 0l.8.8c.6.6.6 1.6 0 2.2l-1.3 1.3-3-3z"/><path d="M8.2 2.8l3 3L4.5 12.5.3 13.7 1.5 9.5z"/><path d="M2.2 10.3l1.5 1.5-1.9.5z" fill="#fff"/></svg>
<div class="a" style="left:41px;top:747px;width:1798px;height:1px;background:#dee2e6"></div>
<div class="a" style="left:1374px;top:748px;width:110px;height:34px;background:#6fc07d"></div>
<div class="a" style="left:49px;top:755px;width:20px;height:20px;background:#1a73f0;border-radius:3px"></div>
<svg class="a" style="left:52px;top:759px;" width="14" height="12" viewBox="0 0 14 12" fill="none"><path d="M1.5 6.2L5.2 9.8 12.5 2.2" stroke="#fff" stroke-width="1.6" fill="none"/></svg>
<svg class="a" style="left:107px;top:758px;" width="12" height="15" viewBox="0 0 12 15" fill="#1a7cf5"><path d="M1.5 2.2h9c.6 0 1 .4 1 1v10.3c0 .6-.4 1-1 1h-9c-.6 0-1-.4-1-1V3.2c0-.6.4-1 1-1z" stroke="#1a7cf5" stroke-width="1.3" fill="none"/><rect x="3.8" y="0.3" width="4.4" height="3" rx=".8"/><circle cx="6" cy="7" r="1.6"/><path d="M3 12.2c0-1.7 1.3-2.9 3-2.9s3 1.2 3 2.9z"/></svg>
<div class="t" style="left:122.6px;top:759.06px;font-size:13.4px;color:#1a7cf5;">119588932</div>
<svg class="a" style="left:215px;top:759px;" width="13" height="13" viewBox="0 0 13 13" fill="#212529"><circle cx="6.5" cy="6.5" r="6.5"/><circle cx="6.5" cy="3.6" r="1.1" fill="#fff"/><path d="M5.2 5.6h2.1v4.2h.9v1.1H4.9V9.8h.9V6.7h-.6z" fill="#fff"/></svg>
<div class="t" style="left:233px;top:759.06px;width:86px;overflow:hidden;font-size:13.4px;color:#212529">Ashley Sub Or</div>
<div class="t" style="left:325.5px;top:758.38px;font-size:14.2px;color:#212529;">07/12/24</div>
<div class="t" style="left:547.0px;top:759.06px;font-size:13.4px;color:#212529;transform-origin:0 0;transform:scaleX(.89)">LOS ANGELES</div>
<div class="t" style="left:657.5px;top:759.06px;font-size:13.4px;color:#212529;transform-origin:0 0;transform:scaleX(.89)">CA</div>
<div class="t" style="left:768.3px;top:759.06px;font-size:13.4px;color:#212529;transform-origin:0 0;transform:scaleX(.89)">LOS ANGELES</div>
<div class="t" style="left:878.5px;top:759.06px;font-size:13.4px;color:#212529;transform-origin:0 0;transform:scaleX(.89)">CA</div>
<svg class="a" style="left:973px;top:759px;" width="18" height="13" viewBox="0 0 18 13" fill="#1a7cf5"><path d="M0 1c0-.6.4-1 1-1h9c.6 0 1 .4 1 1v1.5h3.2c.3 0 .6.1.8.4l2.6 2.8c.2.2.4.5.4.8V10c0 .4-.3.7-.7.7h-1a2.3 2.3 0 0 1-4.6 0H6.5a2.3 2.3 0 0 1-4.6 0H1c-.6 0-1-.4-1-1z"/><path d="M11.5 3.8h2.4l2.3 2.4h-4.7z" fill="#fff"/><circle cx="4.2" cy="10.7" r="1" fill="#fff"/><circle cx="13.3" cy="10.7" r="1" fill="#fff"/></svg>
<div class="t" style="left:995.2px;top:759.06px;font-size:13.4px;color:#1a7cf5;">ALYF</div>
<svg class="a" style="left:1330px;top:758px;" width="12" height="13" viewBox="0 0 12 13" fill="#c6c8ca"><path d="M6 0c.5 0 .8.3.8.8v.6c2 .4 3.4 2.1 3.4 4.2v2.6c0 .7.5 1.4 1.3 2v.9H.5v-.9c.8-.6 1.3-1.3 1.3-2V5.6c0-2.1 1.4-3.8 3.4-4.2V.8C5.2.3 5.5 0 6 0z"/><path d="M4.4 11.6h3.2c0 .9-.7 1.4-1.6 1.4s-1.6-.5-1.6-1.4z"/></svg>
<div class="t" style="left:1129.0px;width:600px;text-align:center;top:759.06px;font-size:13.4px;color:#3a4047;">Committed</div>
<div class="t" style="left:1239.5px;width:600px;text-align:center;top:759.06px;font-size:13.4px;color:#1a7cf5;">2 hours ago</div>
<svg class="a" style="left:1713px;top:758px;" width="16" height="14" viewBox="0 0 16 14" fill="#1b6ff5"><path d="M2.9 1.8h3.9v11.7H0.6z"/><path d="M13.1 1.8H9.2v11.7h6.2z"/><rect x="6.5" y="4.2" width="3" height="4.6"/><rect x="3.3" y="0" width="3.2" height="2.4" rx=".5"/><rect x="9.5" y="0" width="3.2" height="2.4" rx=".5"/></svg>
<svg class="a" style="left:1735px;top:758px;" width="15" height="14" viewBox="0 0 15 14" fill="#1b6ff5"><path d="M5 0h5c.6 0 1 .4 1 1v1.6h2.6c.8 0 1.4.6 1.4 1.4v3.2H9.3v-1H5.7v1H0V4c0-.8.6-1.4 1.4-1.4H4V1c0-.6.4-1 1-1zm.4 1.3v1.3h4.2V1.3z"/><path d="M0 8.2h5.7v1.2h3.6V8.2H15v4.4c0 .8-.6 1.4-1.4 1.4H1.4C.6 14 0 13.4 0 12.6z"/></svg>
<svg class="a" style="left:1756px;top:757.7px;" width="14" height="14" viewBox="0 0 14 14" fill="#1b6ff5"><circle cx="7" cy="7" r="7"/><g fill="#fff"><path d="M1.9 2.6C2.8 1.8 4 1.4 5.2 1.3L6.9 2.2 6.4 3.9 5.3 5.2 4.2 5.6 2 5.5C1.7 4.5 1.6 3.4 1.9 2.6z"/><path d="M5.6 7.2L9.4 7.5C9.7 8.5 9.3 9.6 8.6 10.3L7.2 12 6.6 10.6 6.2 9z"/><path d="M11.6 4.9L13.2 5C13.5 6 13.5 7.1 13.2 8L12 7.4z"/></g></svg>
<svg class="a" style="left:1777px;top:758px;" width="14" height="13" viewBox="0 0 14 13" fill="#1b6ff5"><rect x="0" y="0.6" width="2.2" height="2.2" rx=".4"/><rect x="0" y="5.4" width="2.2" height="2.2" rx=".4"/><rect x="0" y="10.2" width="2.2" height="2.2" rx=".4"/><rect x="4" y="1" width="10" height="1.4" rx=".5"/><rect x="4" y="5.8" width="10" height="1.4" rx=".5"/><rect x="4" y="10.6" width="10" height="1.4" rx=".5"/></svg>
<svg class="a" style="left:1798px;top:759px;" width="14" height="12" viewBox="0 0 14 12" fill="#1b6ff5"><path d="M0 1.2C0 .5.5 0 1.2 0h11.6c.7 0 1.2.5 1.2 1.2v.4L7 6.4 0 1.6z"/><path d="M0 3.2L7 8l7-4.8v7.6c0 .7-.5 1.2-1.2 1.2H1.2C.5 12 0 11.5 0 10.8z"/></svg>
<svg class="a" style="left:1819px;top:758px;" width="14" height="14" viewBox="0 0 14 14" fill="#1b6ff5"><path d="M10.4.6c.6-.6 1.6-.6 2.2 0l.8.8c.6.6.6 1.6 0 2.2l-1.3 1.3-3-3z"/><path d="M8.2 2.8l3 3L4.5 12.5.3 13.7 1.5 9.5z"/><path d="M2.2 10.3l1.5 1.5-1.9.5z" fill="#fff"/></svg>
<div class="a" style="left:41px;top:782px;width:1798px;height:1px;background:#dee2e6"></div>
<div class="a" style="left:1374px;top:783px;width:110px;height:34px;background:#5aa9f8"></div>
<div class="cb" style="left:49px;top:790px;width:20px;height:20px"></div>
<svg class="a" style="left:107px;top:793px;" width="12" height="15" viewBox="0 0 12 15" fill="#1a7cf5"><path d="M1.5 2.2h9c.6 0 1 .4 1 1v10.3c0 .6-.4 1-1 1h-9c-.6 0-1-.4-1-1V3.2c0-.6.4-1 1-1z" stroke="#1a7cf5" stroke-width="1.3" fill="none"/><rect x="3.8" y="0.3" width="4.4" height="3" rx=".8"/><circle cx="6" cy="7" r="1.6"/><path d="M3 12.2c0-1.7 1.3-2.9 3-2.9s3 1.2 3 2.9z"/></svg>
<div class="t" style="left:122.6px;top:794.06px;font-size:13.4px;color:#1a7cf5;">119587585</div>
<svg class="a" style="left:215px;top:794px;" width="13" height="13" viewBox="0 0 13 13" fill="#212529"><circle cx="6.5" cy="6.5" r="6.5"/><circle cx="6.5" cy="3.6" r="1.1" fill="#fff"/><path d="M5.2 5.6h2.1v4.2h.9v1.1H4.9V9.8h.9V6.7h-.6z" fill="#fff"/></svg>
<div class="t" style="left:233px;top:794.06px;width:86px;overflow:hidden;font-size:13.4px;color:#212529">Leo´s second t</div>
<div class="t" style="left:325.5px;top:793.38px;font-size:14.2px;color:#212529;">07/12/24</div>
<div class="t" style="left:547.0px;top:794.06px;font-size:13.4px;color:#212529;transform-origin:0 0;transform:scaleX(.89)">LOS ANGELES</div>
<div class="t" style="left:657.5px;top:794.06px;font-size:13.4px;color:#212529;transform-origin:0 0;transform:scaleX(.89)">CA</div>
<div class="t" style="left:768.3px;top:794.06px;font-size:13.4px;color:#212529;transform-origin:0 0;transform:scaleX(.89)">LOS ANGELES</div>
<div class="t" style="left:878.5px;top:794.06px;font-size:13.4px;color:#212529;transform-origin:0 0;transform:scaleX(.89)">CA</div>
<svg class="a" style="left:973px;top:794px;" width="18" height="13" viewBox="0 0 18 13" fill="#1a7cf5"><path d="M0 1c0-.6.4-1 1-1h9c.6 0 1 .4 1 1v1.5h3.2c.3 0 .6.1.8.4l2.6 2.8c.2.2.4.5.4.8V10c0 .4-.3.7-.7.7h-1a2.3 2.3 0 0 1-4.6 0H6.5a2.3 2.3 0 0 1-4.6 0H1c-.6 0-1-.4-1-1z"/><path d="M11.5 3.8h2.4l2.3 2.4h-4.7z" fill="#fff"/><circle cx="4.2" cy="10.7" r="1" fill="#fff"/><circle cx="13.3" cy="10.7" r="1" fill="#fff"/></svg>
<div class="t" style="left:995.2px;top:794.06px;font-size:13.4px;color:#1a7cf5;">TEST</div>
<svg class="a" style="left:1330px;top:793px;" width="12" height="13" viewBox="0 0 12 13" fill="#c6c8ca"><path d="M6 0c.5 0 .8.3.8.8v.6c2 .4 3.4 2.1 3.4 4.2v2.6c0 .7.5 1.4 1.3 2v.9H.5v-.9c.8-.6 1.3-1.3 1.3-2V5.6c0-2.1 1.4-3.8 3.4-4.2V.8C5.2.3 5.5 0 6 0z"/><path d="M4.4 11.6h3.2c0 .9-.7 1.4-1.6 1.4s-1.6-.5-1.6-1.4z"/></svg>
<div class="t" style="left:1129.0px;width:600px;text-align:center;top:794.06px;font-size:13.4px;color:#3a4047;">Delivered</div>
<div class="t" style="left:1239.5px;width:600px;text-align:center;top:794.06px;font-size:13.4px;color:#1a7cf5;">3 hours ago</div>
<svg class="a" style="left:1713px;top:793px;" width="16" height="14" viewBox="0 0 16 14" fill="#1b6ff5"><path d="M2.9 1.8h3.9v11.7H0.6z"/><path d="M13.1 1.8H9.2v11.7h6.2z"/><rect x="6.5" y="4.2" width="3" height="4.6"/><rect x="3.3" y="0" width="3.2" height="2.4" rx=".5"/><rect x="9.5" y="0" width="3.2" height="2.4" rx=".5"/></svg>
<svg class="a" style="left:1735px;top:793px;" width="15" height="14" viewBox="0 0 15 14" fill="#1b6ff5"><path d="M5 0h5c.6 0 1 .4 1 1v1.6h2.6c.8 0 1.4.6 1.4 1.4v3.2H9.3v-1H5.7v1H0V4c0-.8.6-1.4 1.4-1.4H4V1c0-.6.4-1 1-1zm.4 1.3v1.3h4.2V1.3z"/><path d="M0 8.2h5.7v1.2h3.6V8.2H15v4.4c0 .8-.6 1.4-1.4 1.4H1.4C.6 14 0 13.4 0 12.6z"/></svg>
<svg class="a" style="left:1756px;top:792.7px;" width="14" height="14" viewBox="0 0 14 14" fill="#1b6ff5"><circle cx="7" cy="7" r="7"/><g fill="#fff"><path d="M1.9 2.6C2.8 1.8 4 1.4 5.2 1.3L6.9 2.2 6.4 3.9 5.3 5.2 4.2 5.6 2 5.5C1.7 4.5 1.6 3.4 1.9 2.6z"/><path d="M5.6 7.2L9.4 7.5C9.7 8.5 9.3 9.6 8.6 10.3L7.2 12 6.6 10.6 6.2 9z"/><path d="M11.6 4.9L13.2 5C13.5 6 13.5 7.1 13.2 8L12 7.4z"/></g></svg>
<svg class="a" style="left:1777px;top:793px;" width="14" height="13" viewBox="0 0 14 13" fill="#1b6ff5"><rect x="0" y="0.6" width="2.2" height="2.2" rx=".4"/><rect x="0" y="5.4" width="2.2" height="2.2" rx=".4"/><rect x="0" y="10.2" width="2.2" height="2.2" rx=".4"/><rect x="4" y="1" width="10" height="1.4" rx=".5"/><rect x="4" y="5.8" width="10" height="1.4" rx=".5"/><rect x="4" y="10.6" width="10" height="1.4" rx=".5"/></svg>
<svg class="a" style="left:1798px;top:794px;" width="14" height="12" viewBox="0 0 14 12" fill="#1b6ff5"><path d="M0 1.2C0 .5.5 0 1.2 0h11.6c.7 0 1.2.5 1.2 1.2v.4L7 6.4 0 1.6z"/><path d="M0 3.2L7 8l7-4.8v7.6c0 .7-.5 1.2-1.2 1.2H1.2C.5 12 0 11.5 0 10.8z"/></svg>
<svg class="a" style="left:1819px;top:793px;" width="14" height="14" viewBox="0 0 14 14" fill="#1b6ff5"><path d="M10.4.6c.6-.6 1.6-.6 2.2 0l.8.8c.6.6.6 1.6 0 2.2l-1.3 1.3-3-3z"/><path d="M8.2 2.8l3 3L4.5 12.5.3 13.7 1.5 9.5z"/><path d="M2.2 10.3l1.5 1.5-1.9.5z" fill="#fff"/></svg>
<div class="a" style="left:41px;top:817px;width:1798px;height:1px;background:#dee2e6"></div>
<div class="a" style="left:1374px;top:818px;width:110px;height:34px;background:#5aa9f8"></div>
<div class="cb" style="left:49px;top:825px;width:20px;height:20px"></div>
<svg class="a" style="left:107px;top:828px;" width="12" height="15" viewBox="0 0 12 15" fill="#1a7cf5"><path d="M1.5 2.2h9c.6 0 1 .4 1 1v10.3c0 .6-.4 1-1 1h-9c-.6 0-1-.4-1-1V3.2c0-.6.4-1 1-1z" stroke="#1a7cf5" stroke-width="1.3" fill="none"/><rect x="3.8" y="0.3" width="4.4" height="3" rx=".8"/><circle cx="6" cy="7" r="1.6"/><path d="M3 12.2c0-1.7 1.3-2.9 3-2.9s3 1.2 3 2.9z"/></svg>
<div class="t" style="left:122.6px;top:829.06px;font-size:13.4px;color:#1a7cf5;">119582783</div>
<svg class="a" style="left:215px;top:829px;" width="13" height="13" viewBox="0 0 13 13" fill="#212529"><circle cx="6.5" cy="6.5" r="6.5"/><circle cx="6.5" cy="3.6" r="1.1" fill="#fff"/><path d="M5.2 5.6h2.1v4.2h.9v1.1H4.9V9.8h.9V6.7h-.6z" fill="#fff"/></svg>
<div class="t" style="left:233px;top:829.06px;width:86px;overflow:hidden;font-size:13.4px;color:#212529">daniel ruiz agu</div>
<div class="t" style="left:325.5px;top:828.38px;font-size:14.2px;color:#212529;">06/25/24</div>
<div class="t" style="left:547.0px;top:829.06px;font-size:13.4px;color:#212529;transform-origin:0 0;transform:scaleX(.89)">ST. PETERSBU...</div>
<div class="t" style="left:657.5px;top:829.06px;font-size:13.4px;color:#212529;transform-origin:0 0;transform:scaleX(.89)">FL</div>
<div class="t" style="left:768.3px;top:829.06px;font-size:13.4px;color:#212529;transform-origin:0 0;transform:scaleX(.89)">KATY</div>
<div class="t" style="left:878.5px;top:829.06px;font-size:13.4px;color:#212529;transform-origin:0 0;transform:scaleX(.89)">TX</div>
<svg class="a" style="left:1330px;top:828px;" width="12" height="13" viewBox="0 0 12 13" fill="#c6c8ca"><path d="M6 0c.5 0 .8.3.8.8v.6c2 .4 3.4 2.1 3.4 4.2v2.6c0 .7.5 1.4 1.3 2v.9H.5v-.9c.8-.6 1.3-1.3 1.3-2V5.6c0-2.1 1.4-3.8 3.4-4.2V.8C5.2.3 5.5 0 6 0z"/><path d="M4.4 11.6h3.2c0 .9-.7 1.4-1.6 1.4s-1.6-.5-1.6-1.4z"/></svg>
<div class="t" style="left:1129.0px;width:600px;text-align:center;top:829.06px;font-size:13.4px;color:#3a4047;">Delivered</div>
<div class="t" style="left:1239.5px;width:600px;text-align:center;top:829.06px;font-size:13.4px;color:#1a7cf5;">6 hours ago</div>
<svg class="a" style="left:1713px;top:828px;" width="16" height="14" viewBox="0 0 16 14" fill="#1b6ff5"><path d="M2.9 1.8h3.9v11.7H0.6z"/><path d="M13.1 1.8H9.2v11.7h6.2z"/><rect x="6.5" y="4.2" width="3" height="4.6"/><rect x="3.3" y="0" width="3.2" height="2.4" rx=".5"/><rect x="9.5" y="0" width="3.2" height="2.4" rx=".5"/></svg>
<svg class="a" style="left:1735px;top:828px;" width="15" height="14" viewBox="0 0 15 14" fill="#1b6ff5"><path d="M5 0h5c.6 0 1 .4 1 1v1.6h2.6c.8 0 1.4.6 1.4 1.4v3.2H9.3v-1H5.7v1H0V4c0-.8.6-1.4 1.4-1.4H4V1c0-.6.4-1 1-1zm.4 1.3v1.3h4.2V1.3z"/><path d="M0 8.2h5.7v1.2h3.6V8.2H15v4.4c0 .8-.6 1.4-1.4 1.4H1.4C.6 14 0 13.4 0 12.6z"/></svg>
<svg class="a" style="left:1756px;top:827.7px;" width="14" height="14" viewBox="0 0 14 14" fill="#1b6ff5"><circle cx="7" cy="7" r="7"/><g fill="#fff"><path d="M1.9 2.6C2.8 1.8 4 1.4 5.2 1.3L6.9 2.2 6.4 3.9 5.3 5.2 4.2 5.6 2 5.5C1.7 4.5 1.6 3.4 1.9 2.6z"/><path d="M5.6 7.2L9.4 7.5C9.7 8.5 9.3 9.6 8.6 10.3L7.2 12 6.6 10.6 6.2 9z"/><path d="M11.6 4.9L13.2 5C13.5 6 13.5 7.1 13.2 8L12 7.4z"/></g></svg>
<svg class="a" style="left:1777px;top:828px;" width="14" height="13" viewBox="0 0 14 13" fill="#1b6ff5"><rect x="0" y="0.6" width="2.2" height="2.2" rx=".4"/><rect x="0" y="5.4" width="2.2" height="2.2" rx=".4"/><rect x="0" y="10.2" width="2.2" height="2.2" rx=".4"/><rect x="4" y="1" width="10" height="1.4" rx=".5"/><rect x="4" y="5.8" width="10" height="1.4" rx=".5"/><rect x="4" y="10.6" width="10" height="1.4" rx=".5"/></svg>
<svg class="a" style="left:1798px;top:829px;" width="14" height="12" viewBox="0 0 14 12" fill="#1b6ff5"><path d="M0 1.2C0 .5.5 0 1.2 0h11.6c.7 0 1.2.5 1.2 1.2v.4L7 6.4 0 1.6z"/><path d="M0 3.2L7 8l7-4.8v7.6c0 .7-.5 1.2-1.2 1.2H1.2C.5 12 0 11.5 0 10.8z"/></svg>
<svg class="a" style="left:1819px;top:828px;" width="14" height="14" viewBox="0 0 14 14" fill="#1b6ff5"><path d="M10.4.6c.6-.6 1.6-.6 2.2 0l.8.8c.6.6.6 1.6 0 2.2l-1.3 1.3-3-3z"/><path d="M8.2 2.8l3 3L4.5 12.5.3 13.7 1.5 9.5z"/><path d="M2.2 10.3l1.5 1.5-1.9.5z" fill="#fff"/></svg>
<div class="a" style="left:41px;top:851px;width:1798px;height:1px;background:#dee2e6"></div>
<div class="a" style="left:1374px;top:852px;width:110px;height:39px;background:#5aa9f8"></div>
<div class="cb" style="left:49px;top:859px;width:20px;height:20px"></div>
<svg class="a" style="left:107px;top:862px;" width="12" height="15" viewBox="0 0 12 15" fill="#1a7cf5"><path d="M1.5 2.2h9c.6 0 1 .4 1 1v10.3c0 .6-.4 1-1 1h-9c-.6 0-1-.4-1-1V3.2c0-.6.4-1 1-1z" stroke="#1a7cf5" stroke-width="1.3" fill="none"/><rect x="3.8" y="0.3" width="4.4" height="3" rx=".8"/><circle cx="6" cy="7" r="1.6"/><path d="M3 12.2c0-1.7 1.3-2.9 3-2.9s3 1.2 3 2.9z"/></svg>
<div class="t" style="left:122.6px;top:863.06px;font-size:13.4px;color:#1a7cf5;">119582043</div>
<svg class="a" style="left:215px;top:863px;" width="13" height="13" viewBox="0 0 13 13" fill="#212529"><circle cx="6.5" cy="6.5" r="6.5"/><circle cx="6.5" cy="3.6" r="1.1" fill="#fff"/><path d="M5.2 5.6h2.1v4.2h.9v1.1H4.9V9.8h.9V6.7h-.6z" fill="#fff"/></svg>
<div class="t" style="left:233px;top:863.06px;width:86px;overflow:hidden;font-size:13.4px;color:#212529">Customer 1</div>
<div class="t" style="left:325.5px;top:862.38px;font-size:14.2px;color:#212529;">07/12/24</div>
<div class="t" style="left:436.0px;top:862.38px;font-size:14.2px;color:#212529;">07/17/24</div>
<div class="t" style="left:547.0px;top:863.06px;font-size:13.4px;color:#212529;transform-origin:0 0;transform:scaleX(.89)">GLENVIEW</div>
<div class="t" style="left:657.5px;top:863.06px;font-size:13.4px;color:#212529;transform-origin:0 0;transform:scaleX(.89)">IL</div>
<div class="t" style="left:768.3px;top:863.06px;font-size:13.4px;color:#212529;transform-origin:0 0;transform:scaleX(.89)">TWENTYNINE...</div>
<div class="t" style="left:878.5px;top:863.06px;font-size:13.4px;color:#212529;transform-origin:0 0;transform:scaleX(.89)">CA</div>
<svg class="a" style="left:973px;top:863px;" width="18" height="13" viewBox="0 0 18 13" fill="#1a7cf5"><path d="M0 1c0-.6.4-1 1-1h9c.6 0 1 .4 1 1v1.5h3.2c.3 0 .6.1.8.4l2.6 2.8c.2.2.4.5.4.8V10c0 .4-.3.7-.7.7h-1a2.3 2.3 0 0 1-4.6 0H6.5a2.3 2.3 0 0 1-4.6 0H1c-.6 0-1-.4-1-1z"/><path d="M11.5 3.8h2.4l2.3 2.4h-4.7z" fill="#fff"/><circle cx="4.2" cy="10.7" r="1" fill="#fff"/><circle cx="13.3" cy="10.7" r="1" fill="#fff"/></svg>
<div class="t" style="left:995.2px;top:863.06px;font-size:13.4px;color:#1a7cf5;">testicportal</div>
<svg class="a" style="left:1330px;top:862px;" width="12" height="13" viewBox="0 0 12 13" fill="#c6c8ca"><path d="M6 0c.5 0 .8.3.8.8v.6c2 .4 3.4 2.1 3.4 4.2v2.6c0 .7.5 1.4 1.3 2v.9H.5v-.9c.8-.6 1.3-1.3 1.3-2V5.6c0-2.1 1.4-3.8 3.4-4.2V.8C5.2.3 5.5 0 6 0z"/><path d="M4.4 11.6h3.2c0 .9-.7 1.4-1.6 1.4s-1.6-.5-1.6-1.4z"/></svg>
<div class="t" style="left:1129.0px;width:600px;text-align:center;top:863.06px;font-size:13.4px;color:#3a4047;">Delivered</div>
<div class="t" style="left:1239.5px;width:600px;text-align:center;top:863.06px;font-size:13.4px;color:#1a7cf5;">7 hours ago</div>
<svg class="a" style="left:1713px;top:862px;" width="16" height="14" viewBox="0 0 16 14" fill="#1b6ff5"><path d="M2.9 1.8h3.9v11.7H0.6z"/><path d="M13.1 1.8H9.2v11.7h6.2z"/><rect x="6.5" y="4.2" width="3" height="4.6"/><rect x="3.3" y="0" width="3.2" height="2.4" rx=".5"/><rect x="9.5" y="0" width="3.2" height="2.4" rx=".5"/></svg>
<svg class="a" style="left:1735px;top:862px;" width="15" height="14" viewBox="0 0 15 14" fill="#1b6ff5"><path d="M5 0h5c.6 0 1 .4 1 1v1.6h2.6c.8 0 1.4.6 1.4 1.4v3.2H9.3v-1H5.7v1H0V4c0-.8.6-1.4 1.4-1.4H4V1c0-.6.4-1 1-1zm.4 1.3v1.3h4.2V1.3z"/><path d="M0 8.2h5.7v1.2h3.6V8.2H15v4.4c0 .8-.6 1.4-1.4 1.4H1.4C.6 14 0 13.4 0 12.6z"/></svg>
<svg class="a" style="left:1756px;top:861.7px;" width="14" height="14" viewBox="0 0 14 14" fill="#1b6ff5"><circle cx="7" cy="7" r="7"/><g fill="#fff"><path d="M1.9 2.6C2.8 1.8 4 1.4 5.2 1.3L6.9 2.2 6.4 3.9 5.3 5.2 4.2 5.6 2 5.5C1.7 4.5 1.6 3.4 1.9 2.6z"/><path d="M5.6 7.2L9.4 7.5C9.7 8.5 9.3 9.6 8.6 10.3L7.2 12 6.6 10.6 6.2 9z"/><path d="M11.6 4.9L13.2 5C13.5 6 13.5 7.1 13.2 8L12 7.4z"/></g></svg>
<svg class="a" style="left:1777px;top:862px;" width="14" height="13" viewBox="0 0 14 13" fill="#1b6ff5"><rect x="0" y="0.6" width="2.2" height="2.2" rx=".4"/><rect x="0" y="5.4" width="2.2" height="2.2" rx=".4"/><rect x="0" y="10.2" width="2.2" height="2.2" rx=".4"/><rect x="4" y="1" width="10" height="1.4" rx=".5"/><rect x="4" y="5.8" width="10" height="1.4" rx=".5"/><rect x="4" y="10.6" width="10" height="1.4" rx=".5"/></svg>
<svg class="a" style="left:1798px;top:863px;" width="14" height="12" viewBox="0 0 14 12" fill="#1b6ff5"><path d="M0 1.2C0 .5.5 0 1.2 0h11.6c.7 0 1.2.5 1.2 1.2v.4L7 6.4 0 1.6z"/><path d="M0 3.2L7 8l7-4.8v7.6c0 .7-.5 1.2-1.2 1.2H1.2C.5 12 0 11.5 0 10.8z"/></svg>
<svg class="a" style="left:1819px;top:862px;" width="14" height="14" viewBox="0 0 14 14" fill="#1b6ff5"><path d="M10.4.6c.6-.6 1.6-.6 2.2 0l.8.8c.6.6.6 1.6 0 2.2l-1.3 1.3-3-3z"/><path d="M8.2 2.8l3 3L4.5 12.5.3 13.7 1.5 9.5z"/><path d="M2.2 10.3l1.5 1.5-1.9.5z" fill="#fff"/></svg>
<div class="a" style="left:1808px;top:798px;width:58px;height:58px;border-radius:50%;background:#08a0ba;box-shadow:0 0 3px rgba(0,0,0,.2)"></div>
<svg class="a" style="left:1820px;top:811px;" width="34" height="32" viewBox="0 0 34 32" fill="#fff"><path d="M7 1.5h21c2 0 3 1 3 3V20" stroke="#fff" stroke-width="1.6" fill="none"/><path d="M5.5 5.5h18c2.6 0 4 1.4 4 4v12c0 2.6-1.4 4-4 4H17.5l-3 4.5-3-4.5h-6c-2.6 0-4-1.4-4-4v-12c0-2.6 1.4-4 4-4z" fill="#fff"/></svg>
<div class="a" style="left:1883px;top:0px;width:23px;height:872px;background:#f1f1f1"></div>
<div class="a" style="left:1883px;top:71px;width:21px;height:88px;background:#c1c1c1"></div>
<svg class="a" style="left:1887px;top:10px;" width="12" height="7" viewBox="0 0 12 7" fill="#505050"><path d="M1 7L6 1.5 11 7z"/></svg>
<svg class="a" style="left:1887px;top:857px;" width="12" height="7" viewBox="0 0 12 7" fill="#505050"><path d="M1 0L6 5.5 11 0z"/></svg>
<div class="a" style="left:0px;top:0px;width:1906px;height:1px;background:#3a3a3a"></div>
<svg class="a" style="left:958px;top:409px;" width="22" height="30" viewBox="0 0 22 30" fill="#fff"><path d="M1.2 1.3V24.7L6.7 20.1 10.4 27.4 14.5 25.6 11.8 19.6H18.6z" fill="#fff" stroke="#1a1a1a" stroke-width="1.1" stroke-linejoin="round"/></svg>
</body></html>
